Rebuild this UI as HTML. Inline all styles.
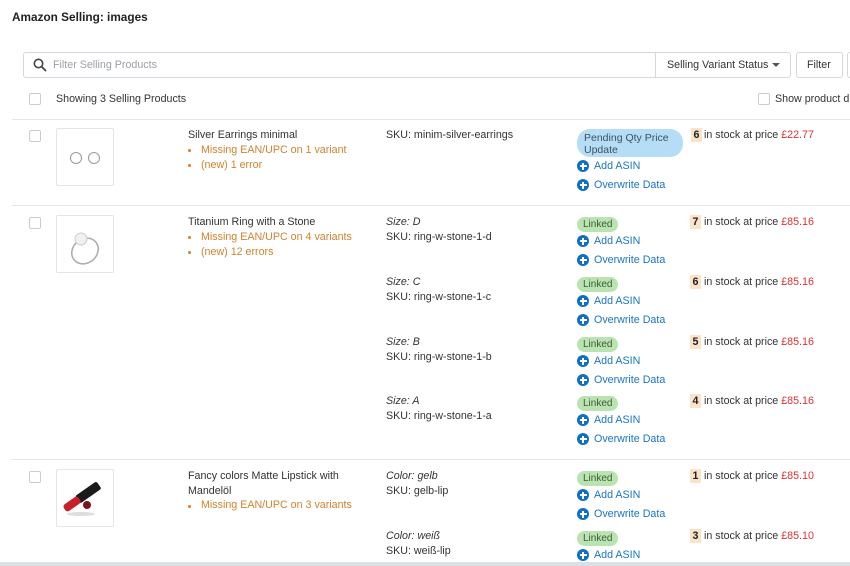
<!DOCTYPE html>
<html><head><meta charset="utf-8"><style>
*{box-sizing:border-box;margin:0;padding:0}
body{width:850px;height:566px;overflow:hidden;background:#fff;font-family:"Liberation Sans",Arial,sans-serif;font-size:10.7px;color:#333;position:relative}
.a{position:absolute;white-space:nowrap;line-height:14px}
.cb{position:absolute;width:12px;height:12px;border:1px solid #c9cdd3;border-radius:2px;background:#fff}
.img{position:absolute;width:58px;height:58px;border:1px solid #e3e5e8;border-radius:2px;background:#fff}
.hr{position:absolute;left:12px;right:0;height:1px;background:#e3e6ea}
.or{color:#d0832f}
.bul{position:absolute;width:3px;height:3px;border-radius:50%;background:#d0832f}
.lk{color:#1b74c5}
.pl{position:absolute;width:12px;height:12px;border-radius:50%;background:#0f6fc6}
.pl:before{content:"";position:absolute;left:2.5px;top:5px;width:7px;height:2px;background:#fff}
.pl:after{content:"";position:absolute;left:5px;top:2.5px;width:2px;height:7px;background:#fff}
.badge{position:absolute;height:15px;line-height:15px;padding:0 6px;border-radius:8px;background:#b9e3b0;color:#3d5a38;font-size:10px}
.n{position:absolute;background:#fbe3c9;font-weight:bold;color:#222;width:11px;height:14px;text-align:center;line-height:14px}
.pr{color:#e03030}
i{font-style:italic}
</style></head><body>
<div class="a" style="left:12px;top:10px;font-size:11.8px;font-weight:bold;color:#222">Amazon Selling: images</div>

<div style="position:absolute;left:23px;top:52px;width:633px;height:26px;border:1px solid #d4d8dd;border-radius:3px 0 0 3px"></div>
<svg style="position:absolute;left:33px;top:58px" width="14" height="14" viewBox="0 0 14 14"><circle cx="5.5" cy="5.5" r="4.2" fill="none" stroke="#444" stroke-width="1.6"/><path d="M8.6 8.6L12.5 12.5" stroke="#444" stroke-width="1.8" stroke-linecap="round"/></svg>
<div class="a" style="left:53px;top:58px;color:#9aa0a8">Filter Selling Products</div>
<div style="position:absolute;left:655px;top:52px;width:136px;height:26px;border:1px solid #d4d8dd;border-radius:0 3px 3px 0"></div>
<div class="a" style="left:667px;top:58px;color:#333">Selling Variant Status</div>
<div style="position:absolute;left:772px;top:63px;border-left:4px solid transparent;border-right:4px solid transparent;border-top:4px solid #555"></div>
<div style="position:absolute;left:796px;top:52px;width:47px;height:26px;border:1px solid #d4d8dd;border-radius:3px"></div>
<div class="a" style="left:807px;top:58px">Filter</div>
<div style="position:absolute;left:847px;top:52px;width:10px;height:26px;border:1px solid #d4d8dd;border-radius:3px"></div>

<div class="cb" style="left:29px;top:93px"></div>
<div class="a" style="left:56px;top:92px">Showing 3 Selling Products</div>
<div class="cb" style="left:758px;top:93px"></div>
<div class="a" style="left:775px;top:92px">Show product d</div>
<div class="hr" style="top:119px"></div>

<!-- row1 -->
<div class="cb" style="left:29px;top:130px"></div>
<div class="img" style="left:56px;top:128px"><svg width="56" height="56"><circle cx="19" cy="29" r="5.5" fill="none" stroke="#999" stroke-width="1"/><circle cx="37" cy="29" r="5.5" fill="none" stroke="#999" stroke-width="1"/></svg></div>
<div class="a" style="left:188px;top:128px">Silver Earrings minimal</div>
<div class="bul" style="left:188px;top:149px"></div><div class="a or" style="left:201px;top:143px">Missing EAN/UPC on 1 variant</div>
<div class="bul" style="left:188px;top:164px"></div><div class="a or" style="left:201px;top:158px">(new) 1 error</div>
<div class="a" style="left:386px;top:128px">SKU: minim-silver-earrings</div>
<div style="position:absolute;left:577px;top:129px;width:106px;height:28px;border-radius:13px;background:#b5ddf5;color:#3d5260;font-size:10.5px;line-height:12px;padding:3px 7px">Pending Qty Price<br>Update</div>
<div class="pl" style="left:577px;top:160px"></div><div class="a lk" style="left:594px;top:159px">Add ASIN</div>
<div class="pl" style="left:577px;top:179px"></div><div class="a lk" style="left:594px;top:178px">Overwrite Data</div>
<div class="n" style="left:691px;top:128px">6</div><div class="a" style="left:704px;top:128px">in stock at price <span class="pr">£22.77</span></div>
<div class="hr" style="top:205px"></div>

<!-- row2 -->
<div class="cb" style="left:29px;top:217px"></div>
<div class="img" style="left:56px;top:215px"><svg width="56" height="56"><ellipse cx="28" cy="35" rx="14" ry="12" fill="none" stroke="#aaa" stroke-width="1.5" transform="rotate(-40 28 35)"/><circle cx="24" cy="23" r="6" fill="#f3f0ec" stroke="#ccc"/></svg></div>
<div class="a" style="left:188px;top:215px">Titanium Ring with a Stone</div>
<div class="bul" style="left:188px;top:236px"></div><div class="a or" style="left:201px;top:230px">Missing EAN/UPC on 4 variants</div>
<div class="bul" style="left:188px;top:251px"></div><div class="a or" style="left:201px;top:245px">(new) 12 errors</div>

<div class="a" style="left:386px;top:215px"><i>Size: D</i></div><div class="a" style="left:386px;top:230px">SKU: ring-w-stone-1-d</div>
<div class="badge" style="left:577px;top:217px">Linked</div>
<div class="pl" style="left:577px;top:235px"></div><div class="a lk" style="left:594px;top:234px">Add ASIN</div>
<div class="pl" style="left:577px;top:254px"></div><div class="a lk" style="left:594px;top:253px">Overwrite Data</div>
<div class="n" style="left:690px;top:215px">7</div><div class="a" style="left:704px;top:215px">in stock at price <span class="pr">£85.16</span></div>

<div class="a" style="left:386px;top:275px"><i>Size: C</i></div><div class="a" style="left:386px;top:290px">SKU: ring-w-stone-1-c</div>
<div class="badge" style="left:577px;top:277px">Linked</div>
<div class="pl" style="left:577px;top:295px"></div><div class="a lk" style="left:594px;top:294px">Add ASIN</div>
<div class="pl" style="left:577px;top:314px"></div><div class="a lk" style="left:594px;top:313px">Overwrite Data</div>
<div class="n" style="left:690px;top:275px">6</div><div class="a" style="left:704px;top:275px">in stock at price <span class="pr">£85.16</span></div>

<div class="a" style="left:386px;top:335px"><i>Size: B</i></div><div class="a" style="left:386px;top:350px">SKU: ring-w-stone-1-b</div>
<div class="badge" style="left:577px;top:337px">Linked</div>
<div class="pl" style="left:577px;top:355px"></div><div class="a lk" style="left:594px;top:354px">Add ASIN</div>
<div class="pl" style="left:577px;top:374px"></div><div class="a lk" style="left:594px;top:373px">Overwrite Data</div>
<div class="n" style="left:690px;top:335px">5</div><div class="a" style="left:704px;top:335px">in stock at price <span class="pr">£85.16</span></div>

<div class="a" style="left:386px;top:394px"><i>Size: A</i></div><div class="a" style="left:386px;top:409px">SKU: ring-w-stone-1-a</div>
<div class="badge" style="left:577px;top:396px">Linked</div>
<div class="pl" style="left:577px;top:414px"></div><div class="a lk" style="left:594px;top:413px">Add ASIN</div>
<div class="pl" style="left:577px;top:433px"></div><div class="a lk" style="left:594px;top:432px">Overwrite Data</div>
<div class="n" style="left:690px;top:394px">4</div><div class="a" style="left:704px;top:394px">in stock at price <span class="pr">£85.16</span></div>
<div class="hr" style="top:459px"></div>

<!-- row3 -->
<div class="cb" style="left:29px;top:471px"></div>
<div class="img" style="left:56px;top:469px"><svg width="56" height="56"><rect x="18" y="18" width="26" height="9" rx="2" fill="#1a1a1a" transform="rotate(-35 31 22)"/><rect x="6" y="30" width="18" height="8" rx="3" fill="#c8202a" transform="rotate(-35 15 34)"/><circle cx="30" cy="35" r="4" fill="#7a1520"/><ellipse cx="24" cy="44" rx="14" ry="2" fill="#ddd"/></svg></div>
<div class="a" style="left:188px;top:469px">Fancy colors Matte Lipstick with</div>
<div class="a" style="left:188px;top:484px">Mandelöl</div>
<div class="bul" style="left:188px;top:505px"></div><div class="a or" style="left:201px;top:498px">Missing EAN/UPC on 3 variants</div>

<div class="a" style="left:386px;top:469px"><i>Color: gelb</i></div><div class="a" style="left:386px;top:484px">SKU: gelb-lip</div>
<div class="badge" style="left:577px;top:471px">Linked</div>
<div class="pl" style="left:577px;top:489px"></div><div class="a lk" style="left:594px;top:488px">Add ASIN</div>
<div class="pl" style="left:577px;top:508px"></div><div class="a lk" style="left:594px;top:507px">Overwrite Data</div>
<div class="n" style="left:690px;top:469px">1</div><div class="a" style="left:704px;top:469px">in stock at price <span class="pr">£85.10</span></div>

<div class="a" style="left:386px;top:529px"><i>Color: weiß</i></div><div class="a" style="left:386px;top:544px">SKU: weiß-lip</div>
<div class="badge" style="left:577px;top:531px">Linked</div>
<div class="pl" style="left:577px;top:549px"></div><div class="a lk" style="left:594px;top:548px">Add ASIN</div>
<div class="n" style="left:690px;top:529px">3</div><div class="a" style="left:704px;top:529px">in stock at price <span class="pr">£85.10</span></div>

<div style="position:absolute;left:0;right:0;top:562px;height:4px;background:#dcdfe3"></div>
</body></html>
